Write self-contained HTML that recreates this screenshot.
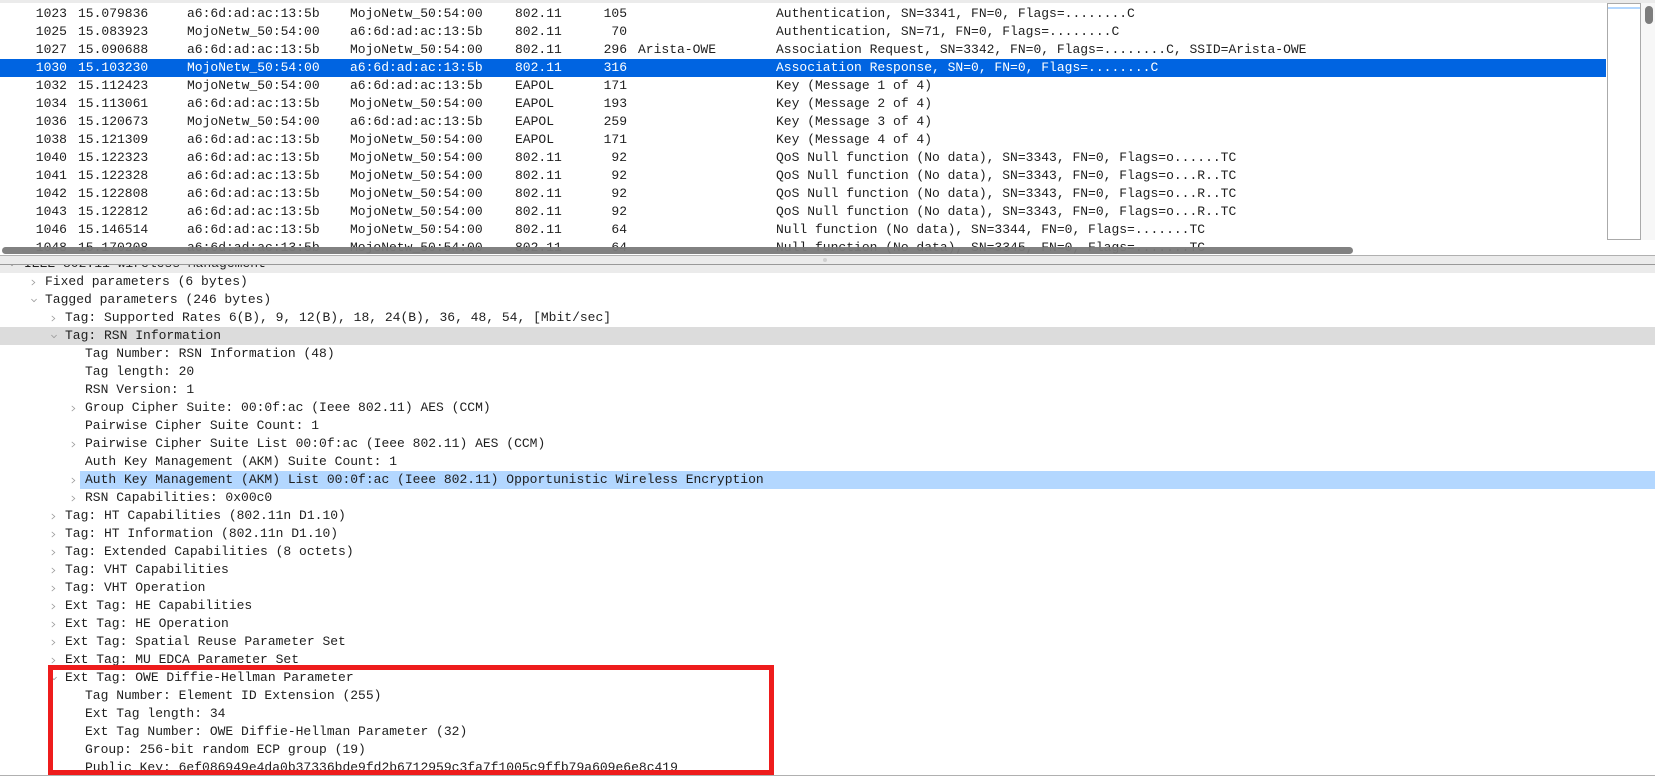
<!DOCTYPE html>
<html><head><meta charset="utf-8"><style>
*{margin:0;padding:0;box-sizing:border-box}
body{width:1655px;height:776px;overflow:hidden;background:#fff;position:relative;font-family:"Liberation Mono",monospace;font-size:13px;color:#1e1e1e}
.r{position:absolute;left:0;height:18px;line-height:18px;white-space:pre;width:1606px}
.r span{position:absolute;top:0}
.sel{background:#0064e1;color:#fff}
.l{position:absolute;left:0;width:1655px;height:18px;line-height:18px;white-space:pre}
.l span{position:absolute;top:0}
.a{position:absolute;top:5px;width:6px;height:9px}
</style></head><body>
<div style="position:absolute;left:0;top:0;width:1655px;height:3px;background:#ebebeb"></div>
<div id="top"></div>
<div style="position:absolute;left:1607px;top:3px;width:34px;height:237px;border:1px solid #aaa;background:#fff"></div>
<div style="position:absolute;left:1608px;top:7px;width:32px;height:2px;background:#b3d7ff"></div>
<div style="position:absolute;left:1641px;top:3px;width:14px;height:237px;background:#f7f7f7"></div>
<div style="position:absolute;left:1645px;top:6px;width:8px;height:18px;border-radius:4px;background:#7d7d7d"></div>
<div style="position:absolute;left:2px;top:247px;width:1351px;height:7px;border-radius:4px;background:#7a7a7a;opacity:.95"></div>
<div style="position:absolute;left:0;top:255px;width:1655px;height:1px;background:#b0b0b0"></div>
<div style="position:absolute;left:0;top:256px;width:1655px;height:8px;background:#ebebeb"></div>
<div style="position:absolute;left:823px;top:258px;width:4px;height:4px;border-radius:2px;background:#d0d0d0"></div>
<div style="position:absolute;left:0;top:264px;width:1655px;height:1px;background:#999"></div>
<div style="position:absolute;left:0;top:265px;width:1655px;height:511px;overflow:hidden" id="bot"></div>
<div style="position:absolute;left:48px;top:665px;width:726px;height:110px;border:5px solid #ee1c1c"></div>
<div style="position:absolute;left:0;top:775px;width:1655px;height:1px;background:#b0b0b0"></div>
<script>
var rows=[
["1023","15.079836","a6:6d:ad:ac:13:5b","MojoNetw_50:54:00","802.11","105","","Authentication, SN=3341, FN=0, Flags=........C"],
["1025","15.083923","MojoNetw_50:54:00","a6:6d:ad:ac:13:5b","802.11","70","","Authentication, SN=71, FN=0, Flags=........C"],
["1027","15.090688","a6:6d:ad:ac:13:5b","MojoNetw_50:54:00","802.11","296","Arista-OWE","Association Request, SN=3342, FN=0, Flags=........C, SSID=Arista-OWE"],
["1030","15.103230","MojoNetw_50:54:00","a6:6d:ad:ac:13:5b","802.11","316","","Association Response, SN=0, FN=0, Flags=........C"],
["1032","15.112423","MojoNetw_50:54:00","a6:6d:ad:ac:13:5b","EAPOL","171","","Key (Message 1 of 4)"],
["1034","15.113061","a6:6d:ad:ac:13:5b","MojoNetw_50:54:00","EAPOL","193","","Key (Message 2 of 4)"],
["1036","15.120673","MojoNetw_50:54:00","a6:6d:ad:ac:13:5b","EAPOL","259","","Key (Message 3 of 4)"],
["1038","15.121309","a6:6d:ad:ac:13:5b","MojoNetw_50:54:00","EAPOL","171","","Key (Message 4 of 4)"],
["1040","15.122323","a6:6d:ad:ac:13:5b","MojoNetw_50:54:00","802.11","92","","QoS Null function (No data), SN=3343, FN=0, Flags=o......TC"],
["1041","15.122328","a6:6d:ad:ac:13:5b","MojoNetw_50:54:00","802.11","92","","QoS Null function (No data), SN=3343, FN=0, Flags=o...R..TC"],
["1042","15.122808","a6:6d:ad:ac:13:5b","MojoNetw_50:54:00","802.11","92","","QoS Null function (No data), SN=3343, FN=0, Flags=o...R..TC"],
["1043","15.122812","a6:6d:ad:ac:13:5b","MojoNetw_50:54:00","802.11","92","","QoS Null function (No data), SN=3343, FN=0, Flags=o...R..TC"],
["1046","15.146514","a6:6d:ad:ac:13:5b","MojoNetw_50:54:00","802.11","64","","Null function (No data), SN=3344, FN=0, Flags=.......TC"],
["1048","15.170208","a6:6d:ad:ac:13:5b","MojoNetw_50:54:00","802.11","64","","Null function (No data), SN=3345, FN=0, Flags=.......TC"]];
var h="";
rows.forEach(function(r,i){
 h+='<div class="r'+(i==3?' sel':'')+'" style="top:'+(5+18*i)+'px"><span style="right:'+(1606-67)+'px">'+r[0]+'</span><span style="left:78px">'+r[1]+'</span><span style="left:187px">'+r[2]+'</span><span style="left:350px">'+r[3]+'</span><span style="left:515px">'+r[4]+'</span><span style="right:'+(1606-627)+'px">'+r[5]+'</span><span style="left:638px">'+r[6]+'</span><span style="left:776px">'+r[7]+'</span></div>';
});
document.getElementById('top').innerHTML=h;
var C='<path d="M1 1L5 4.5L1 8" fill="none" stroke="#999" stroke-width="1.1"/>';
var O='<path d="M0.5 2.5L4 6L7.5 2.5" fill="none" stroke="#999" stroke-width="1.1"/>';
var L=[
[1,"c","Fixed parameters (6 bytes)"],[1,"o","Tagged parameters (246 bytes)"],
[2,"c","Tag: Supported Rates 6(B), 9, 12(B), 18, 24(B), 36, 48, 54, [Mbit/sec]"],
[2,"o","Tag: RSN Information","g"],
[3,"","Tag Number: RSN Information (48)"],[3,"","Tag length: 20"],[3,"","RSN Version: 1"],
[3,"c","Group Cipher Suite: 00:0f:ac (Ieee 802.11) AES (CCM)"],
[3,"","Pairwise Cipher Suite Count: 1"],
[3,"c","Pairwise Cipher Suite List 00:0f:ac (Ieee 802.11) AES (CCM)"],
[3,"","Auth Key Management (AKM) Suite Count: 1"],
[3,"c","Auth Key Management (AKM) List 00:0f:ac (Ieee 802.11) Opportunistic Wireless Encryption","b"],
[3,"c","RSN Capabilities: 0x00c0"],
[2,"c","Tag: HT Capabilities (802.11n D1.10)"],[2,"c","Tag: HT Information (802.11n D1.10)"],
[2,"c","Tag: Extended Capabilities (8 octets)"],[2,"c","Tag: VHT Capabilities"],[2,"c","Tag: VHT Operation"],
[2,"c","Ext Tag: HE Capabilities"],[2,"c","Ext Tag: HE Operation"],[2,"c","Ext Tag: Spatial Reuse Parameter Set"],
[2,"c","Ext Tag: MU EDCA Parameter Set"],[2,"o","Ext Tag: OWE Diffie-Hellman Parameter"],
[3,"","Tag Number: Element ID Extension (255)"],[3,"","Ext Tag length: 34"],
[3,"","Ext Tag Number: OWE Diffie-Hellman Parameter (32)"],[3,"","Group: 256-bit random ECP group (19)"],
[3,"","Public Key: 6ef086949e4da0b37336bde9fd2b6712959c3fa7f1005c9ffb79a609e6e8c419"]];
var b='<div class="l" style="top:-10px;background:#ebebeb"><svg class="a" style="left:9px" viewBox="0 0 8 9">'+O+'</svg><span style="left:24px">IEEE 802.11 Wireless Management</span></div>';
L.forEach(function(x,i){
 var top=8+18*i, tx=25+20*x[0], bg='';
 if(x[3]=="g")bg='background:#dcdcdc;';
 var hl=x[3]=="b"?'<div style="position:absolute;left:80px;top:0;width:1575px;height:18px;background:#b3d7ff"></div>':'';
 var ar=x[1]?'<svg class="a" style="left:'+(tx-14)+'px" viewBox="0 0 8 9">'+(x[1]=="c"?C:O)+'</svg>':'';
 b+='<div class="l" style="top:'+top+'px;'+bg+'">'+hl+ar+'<span style="left:'+tx+'px">'+x[2]+'</span></div>';
});
document.getElementById('bot').innerHTML=b;
</script>
</body></html>
